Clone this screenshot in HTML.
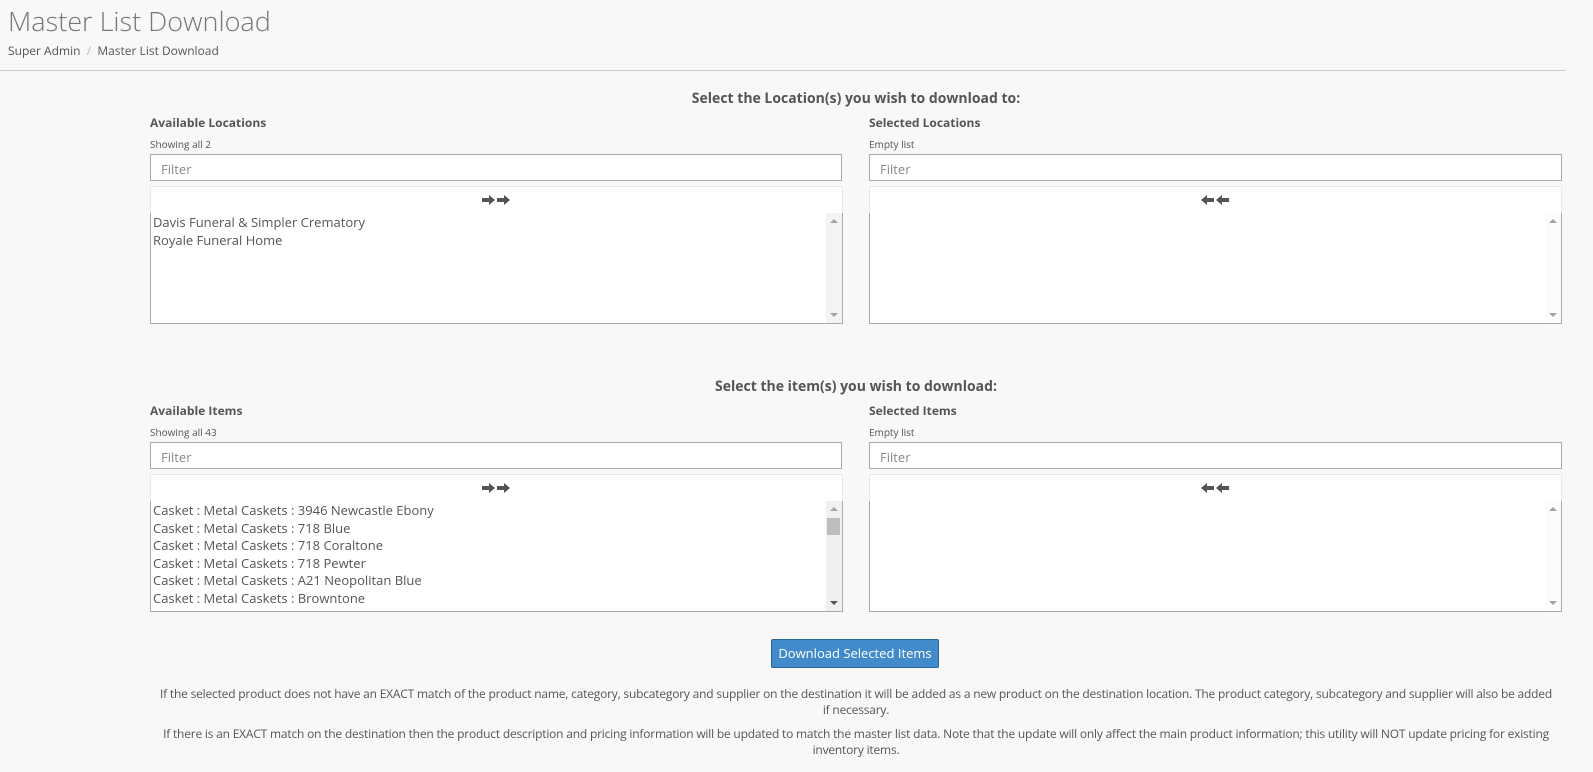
<!DOCTYPE html>
<html><head><style>
body{margin:0;background:#f8f8f8;font-family:"Open Sans","Liberation Sans",sans-serif;color:#555;width:1593px;height:772px;overflow:hidden;position:relative}
.a{position:absolute}
.title{left:8px;top:2px;font-size:27px;color:#777;font-weight:300}
.bc{left:8px;top:42px;font-size:12px;color:#555}
.hr{left:0;top:70px;width:1566px;height:1px;background:#ccc}
.h{left:150px;width:1412px;text-align:center;font-size:14px;font-weight:bold;color:#555}
.lab{font-size:12px;font-weight:bold;color:#555}
.sm{font-size:10px;color:#555}
.inp{width:692px;height:27px;border:1px solid #aaa;background:#fff;font-size:13px;color:#888;box-sizing:border-box;padding:5px 10px}
.bar{width:693px;height:28px;background:#fff;border:1px solid #e8e8e8;box-sizing:border-box;text-align:center}
.bar svg{margin-top:8px}
.list{width:693px;height:111px;background:#fff;border:1px solid #aaa;border-top:none;box-sizing:border-box;font-size:13px;color:#555;padding:1px 2px;line-height:17.6px;overflow:hidden}
.sb{position:absolute;right:0;top:0;width:16px;height:100%;background:#f3f3f3}
.up,.dn{position:absolute;left:4px;width:0;height:0;border-left:4px solid transparent;border-right:4px solid transparent}
.up{top:6px;border-bottom:4px solid #a3a3a3}
.dn{bottom:6px;border-top:4px solid #a3a3a3}
.btn{left:771px;top:639px;width:168px;height:29px;background:#428bca;border:1px solid #2a6496;box-sizing:border-box;border-radius:2px;color:#fff;font-size:13px;text-align:center;line-height:27px}
.p{left:100px;width:1512px;text-align:center;font-size:12px;line-height:16px;color:#555;letter-spacing:-0.2px;white-space:nowrap}
</style></head><body>
<div class="a title">Master List Download</div>
<div class="a bc">Super Admin &nbsp;<span style="color:#bbb">/</span>&nbsp; Master List Download</div>
<div class="a hr"></div>

<div class="a h" style="top:89px">Select the Location(s) you wish to download to:</div>
<div class="a lab" style="left:150px;top:114px">Available Locations</div>
<div class="a lab" style="left:869px;top:114px">Selected Locations</div>
<div class="a sm" style="left:150px;top:137px">Showing all 2</div>
<div class="a sm" style="left:869px;top:137px">Empty list</div>
<div class="a inp" style="left:150px;top:154px">Filter</div>
<div class="a inp" style="left:869px;top:154px;width:693px">Filter</div>
<div class="a bar" style="left:150px;top:186px"><svg width="30" height="10" viewBox="0 0 30 10"><path d="M0 3h7V0l6 5-6 5V7H0z M15 3h7V0l6 5-6 5V7h-7z" fill="#555"/></svg></div>
<div class="a bar" style="left:869px;top:186px"><svg width="30" height="10" viewBox="0 0 30 10"><path d="M13 3H6V0L0 5l6 5V7h7z M28 3h-7V0l-6 5 6 5V7h7z" fill="#555"/></svg></div>
<div class="a list" style="left:150px;top:213px">Davis Funeral &amp; Simpler Crematory<br>Royale Funeral Home<div class="sb"><div class="up"></div><div class="dn"></div></div></div>
<div class="a list" style="left:869px;top:213px"><div class="sb" style="background:#fbfbfb"><div class="up"></div><div class="dn"></div></div></div>

<div class="a h" style="top:377px">Select the item(s) you wish to download:</div>
<div class="a lab" style="left:150px;top:402px">Available Items</div>
<div class="a lab" style="left:869px;top:402px">Selected Items</div>
<div class="a sm" style="left:150px;top:425px">Showing all 43</div>
<div class="a sm" style="left:869px;top:425px">Empty list</div>
<div class="a inp" style="left:150px;top:442px">Filter</div>
<div class="a inp" style="left:869px;top:442px;width:693px">Filter</div>
<div class="a bar" style="left:150px;top:474px"><svg width="30" height="10" viewBox="0 0 30 10"><path d="M0 3h7V0l6 5-6 5V7H0z M15 3h7V0l6 5-6 5V7h-7z" fill="#555"/></svg></div>
<div class="a bar" style="left:869px;top:474px"><svg width="30" height="10" viewBox="0 0 30 10"><path d="M13 3H6V0L0 5l6 5V7h7z M28 3h-7V0l-6 5 6 5V7h7z" fill="#555"/></svg></div>
<div class="a list" style="left:150px;top:501px">Casket : Metal Caskets : 3946 Newcastle Ebony<br>Casket : Metal Caskets : 718 Blue<br>Casket : Metal Caskets : 718 Coraltone<br>Casket : Metal Caskets : 718 Pewter<br>Casket : Metal Caskets : A21 Neopolitan Blue<br>Casket : Metal Caskets : Browntone<div class="sb" style="background:#f0f0f0"><div class="up"></div><div style="position:absolute;left:1px;top:17px;width:13px;height:17px;background:#bdbdbd"></div><div class="dn" style="border-top-color:#555"></div></div></div>
<div class="a list" style="left:869px;top:501px"><div class="sb" style="background:#fbfbfb"><div class="up"></div><div class="dn"></div></div></div>

<div class="a btn">Download Selected Items</div>
<div class="a p" style="top:686px">If the selected product does not have an EXACT match of the product name, category, subcategory and supplier on the destination it will be added as a new product on the destination location. The product category, subcategory and supplier will also be added<br>if necessary.</div>
<div class="a p" style="top:726px">If there is an EXACT match on the destination then the product description and pricing information will be updated to match the master list data. Note that the update will only affect the main product information; this utility will NOT update pricing for existing<br>inventory items.</div>
</body></html>
